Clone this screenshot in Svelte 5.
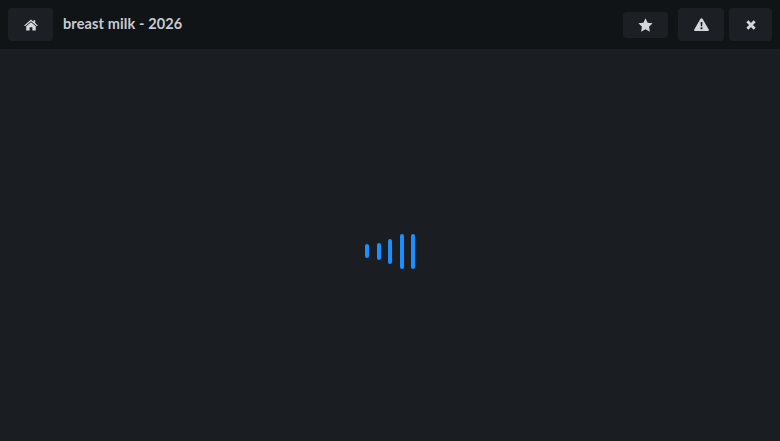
<script lang="ts">
	const bars = [
		{ height: 14 },
		{ height: 17 },
		{ height: 25 },
		{ height: 35 },
		{ height: 35 }
	];
</script>

<div class="page">
	<header class="topbar">
		<button class="icon-btn home" aria-label="Home">
			<svg viewBox="0 0 16 14" width="14" height="12" fill="currentColor">
				<path d="M8 0.6 L10.9 3.1 V1.6 H12.9 V4.8 L16 7.5 L15 8.6 L8 2.6 L1 8.6 L0 7.5 Z" />
				<path d="M8 3.8 L13.6 8.6 V13.4 H9.6 V9.6 H6.4 V13.4 H2.4 V8.6 Z" />
			</svg>
		</button>
		<h1 class="title">breast milk - 2026</h1>
		<div class="actions">
			<button class="icon-btn star" aria-label="Favourite">
				<svg viewBox="0 0 16 15" width="15" height="14" fill="currentColor">
					<path d="M8 0.3 L10.3 5 L15.6 5.7 L11.8 9.4 L12.7 14.6 L8 12.1 L3.3 14.6 L4.2 9.4 L0.4 5.7 L5.7 5 Z" />
				</svg>
			</button>
			<button class="icon-btn warn" aria-label="Report">
				<svg viewBox="0 0 16 14" width="15" height="13">
					<path fill="currentColor" d="M8 0.2 C8.5 0.2 8.9 0.5 9.1 0.9 L15.8 12.4 C16.2 13.1 15.7 14 14.8 14 H1.2 C0.3 14 -0.2 13.1 0.2 12.4 L6.9 0.9 C7.1 0.5 7.5 0.2 8 0.2 Z" />
					<path fill="#1c1f23" d="M7 4.4 H9 L8.7 8.9 H7.3 Z M7 10 H9 V12 H7 Z" />
				</svg>
			</button>
			<button class="icon-btn close" aria-label="Close">
				<svg viewBox="0 0 12 12" width="10" height="10" fill="none" stroke="currentColor" stroke-width="3.4">
					<path d="M1.6 1.6 L10.4 10.4 M10.4 1.6 L1.6 10.4" />
				</svg>
			</button>
		</div>
	</header>

	<main class="content">
		<div class="loader">
			{#each bars as bar}
				<span class="bar" style="height: {bar.height}px"></span>
			{/each}
		</div>
	</main>
</div>

<style>
	:global(body) {
		margin: 0;
		background: #1a1d21;
	}

	.page {
		display: flex;
		flex-direction: column;
		height: 441px;
		overflow: hidden;
		font-family: "Lato", "Open Sans", sans-serif;
	}

	.topbar {
		display: flex;
		align-items: center;
		height: 49px;
		padding: 0 8px;
		box-sizing: border-box;
		background: #111417;
	}

	.title {
		margin: 0 0 2px 10px;
		font-size: 14.5px;
		font-weight: 700;
		letter-spacing: 0.12px;
		color: #c6ccd3;
	}

	.actions {
		display: flex;
		align-items: center;
		margin-left: auto;
	}

	.icon-btn {
		display: flex;
		align-items: center;
		justify-content: center;
		height: 33px;
		padding: 0;
		border: none;
		border-radius: 4px;
		background: #1c1f23;
		color: #d4d8dc;
	}

	.home {
		width: 45px;
	}

	.star {
		width: 45px;
		height: 26px;
		margin-right: 10px;
	}

	.warn {
		width: 46px;
		margin-right: 5px;
	}

	.close {
		width: 43px;
	}

	.content {
		flex: 1;
		display: flex;
		align-items: center;
		justify-content: center;
		background: #1a1d21;
	}

	.loader {
		display: flex;
		align-items: center;
		gap: 7.5px;
		margin-top: 12px;
	}

	.bar {
		width: 4px;
		border-radius: 2px;
		background: #1a8fff;
	}
</style>
